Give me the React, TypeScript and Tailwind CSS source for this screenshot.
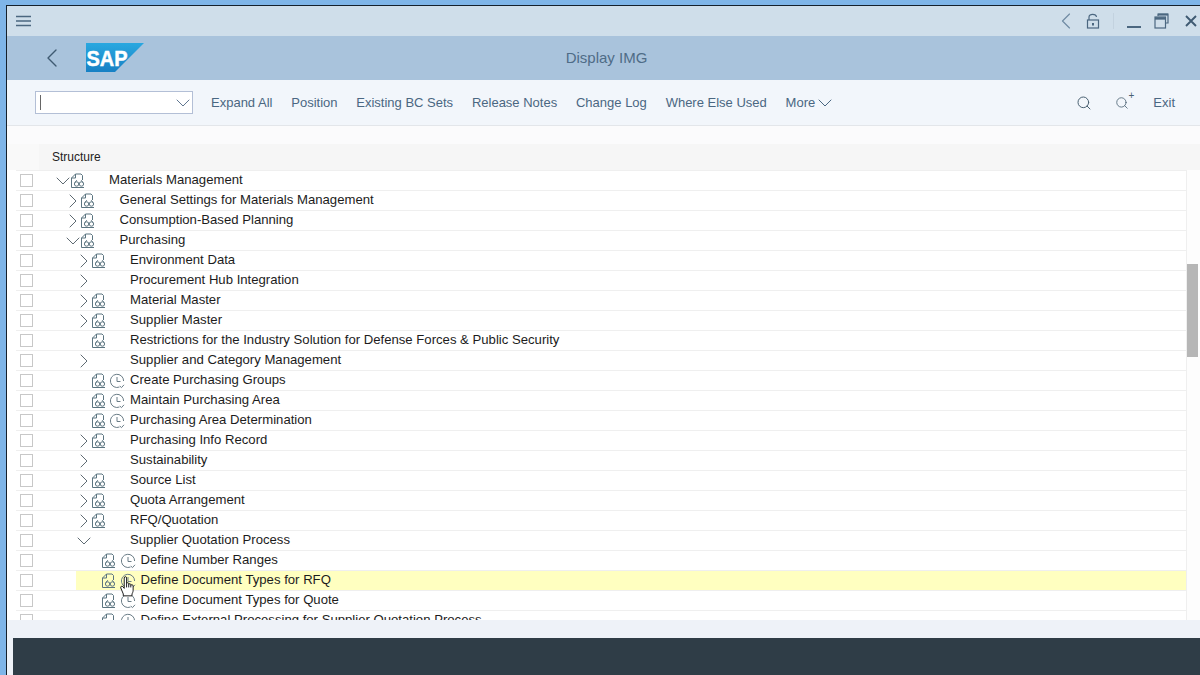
import { ChevronDown, ChevronLeft, ChevronRight, Search } from 'lucide-react';

type Row = {
  label: string;
  level: 0 | 1 | 2 | 3;
  arrow?: 'open' | 'closed';
  doc?: boolean;
  clock?: boolean;
  active?: boolean;
};

const rows: Row[] = [
  { label: 'Materials Management', level: 0, arrow: 'open', doc: true },
  { label: 'General Settings for Materials Management', level: 1, arrow: 'closed', doc: true },
  { label: 'Consumption-Based Planning', level: 1, arrow: 'closed', doc: true },
  { label: 'Purchasing', level: 1, arrow: 'open', doc: true },
  { label: 'Environment Data', level: 2, arrow: 'closed', doc: true },
  { label: 'Procurement Hub Integration', level: 2, arrow: 'closed' },
  { label: 'Material Master', level: 2, arrow: 'closed', doc: true },
  { label: 'Supplier Master', level: 2, arrow: 'closed', doc: true },
  { label: 'Restrictions for the Industry Solution for Defense Forces & Public Security', level: 2, doc: true },
  { label: 'Supplier and Category Management', level: 2, arrow: 'closed' },
  { label: 'Create Purchasing Groups', level: 2, doc: true, clock: true },
  { label: 'Maintain Purchasing Area', level: 2, doc: true, clock: true },
  { label: 'Purchasing Area Determination', level: 2, doc: true, clock: true },
  { label: 'Purchasing Info Record', level: 2, arrow: 'closed', doc: true },
  { label: 'Sustainability', level: 2, arrow: 'closed' },
  { label: 'Source List', level: 2, arrow: 'closed', doc: true },
  { label: 'Quota Arrangement', level: 2, arrow: 'closed', doc: true },
  { label: 'RFQ/Quotation', level: 2, arrow: 'closed', doc: true },
  { label: 'Supplier Quotation Process', level: 2, arrow: 'open' },
  { label: 'Define Number Ranges', level: 3, doc: true, clock: true },
  { label: 'Define Document Types for RFQ', level: 3, doc: true, clock: true, active: true },
  { label: 'Define Document Types for Quote', level: 3, doc: true, clock: true },
  { label: 'Define External Processing for Supplier Quotation Process', level: 3, doc: true, clock: true },
];

const indents = ['w-[7px]', 'w-[17.5px]', 'w-[28px]', 'w-[38.5px]'];
const tools = ['Expand All', 'Position', 'Existing BC Sets', 'Release Notes', 'Change Log', 'Where Else Used'];

// page with a folded corner and reading glasses
const DocIcon = () => (
  <svg className="shrink-0" width="15" height="16" viewBox="0 0 15 16" fill="none" stroke="#5b7480" strokeWidth="1">
    <path d="M1.5 14.5 V5 L5.5 1 H11 L12.5 2.5 V7" />
    <path d="M5.5 1 V5 H1.5" />
    <path d="M1.5 14.5 H14" />
    <circle cx="6.6" cy="11" r="2.2" />
    <circle cx="11.4" cy="11" r="2.2" />
    <path d="M8.8 10.6 H9.2 M4.8 9.6 L6.8 7.2 M13 9.6 L11.2 7.2" />
  </svg>
);

const ClockIcon = () => (
  <svg className="shrink-0" width="16" height="16" viewBox="0 0 16 16" fill="none" stroke="#6b7d87" strokeWidth="1">
    <path d="M10.5 14 A6.6 6.6 0 1 1 14.6 8" />
    <path d="M8 4 V8.5 H11.5" />
    <path d="M10.8 13 L12.5 14.6 L15 11.8" />
  </svg>
);

const HandCursor = () => (
  <svg width="15" height="22" viewBox="0 0 16 23" fill="#ffffff" stroke="#111111" strokeWidth="1" strokeLinejoin="round">
    <path d="M3.5 20 L0.8 13.5 C0.3 12 2 11 3 12.2 L4.5 14 V3 C4.5 1 7 1 7 3 V9 C7 7.6 9.3 7.6 9.3 9 V10 C9.3 8.8 11.5 8.8 11.5 10 V11 C11.5 9.9 14 9.9 14 11.2 V16 C14 18 13.2 19 12.8 20 V22 H3.5 Z" />
    <path d="M7 9 V13 M9.3 10 V13 M11.5 11 V13" fill="none" />
  </svg>
);

const TreeRow = ({ row }: { row: Row }) => (
  <div className="flex h-5 shrink-0 border-t border-[#efefef]">
    <div className="flex w-[31px] shrink-0 items-center pl-[4px]">
      <span className="block h-[13px] w-[13px] border border-[#c8c8c8] bg-white" />
    </div>
    <div className={`shrink-0 ${indents[row.level]}`} />
    <div className={`relative flex flex-1 items-center ${row.active ? '-ml-[10px] bg-[#ffffc0] pl-[10px]' : ''}`}>
      <span className="flex w-[16px] shrink-0 justify-center pl-[1px] text-[#5f6b73]">
        {row.arrow === 'open' && <ChevronDown size={24} strokeWidth={1} className="shrink-0" />}
        {row.arrow === 'closed' && <ChevronRight size={24} strokeWidth={1} className="shrink-0" />}
      </span>
      <span className="flex w-[14px] shrink-0 justify-center">{row.doc && <DocIcon />}</span>
      <span className="flex w-[25px] shrink-0 justify-center pr-[1px]">{row.clock && <ClockIcon />}</span>
      <span className="-mt-px whitespace-nowrap text-[13.15px] text-[#1c1c1c]">{row.label}</span>
      {row.active && (
        <span className="absolute left-[44px] top-[4px] z-10">
          <HandCursor />
        </span>
      )}
    </div>
  </div>
);

const App = () => {
  return (
    <div className="h-[675px] w-[1200px] overflow-hidden bg-[#7fb5e8] pl-[6px] pt-[5px] font-['Liberation_Sans',Arial,sans-serif]">
      <div className="flex h-full flex-col border-l border-t border-[#15202b] bg-[#eef2f8]">
        <div className="flex h-[30px] shrink-0 items-center bg-[#cfdeea] pl-[9px] pr-[3px] text-[#4b6780]">
          <svg width="15" height="12" viewBox="0 0 15 12" stroke="#4b6780" strokeWidth="1.5">
            <path d="M0 1.5 H15 M0 6 H15 M0 10.5 H15" />
          </svg>
          <div className="ml-auto flex items-center">
            <ChevronLeft size={28} strokeWidth={1} className="-ml-[5px] -mr-[4px] text-[#6f8ba3]" />
            <svg className="ml-[10px]" width="14" height="16" viewBox="0 0 14 16" fill="none" stroke="#4b6780" strokeWidth="1.2">
              <path d="M3 7 V4 C3 0.5 10 0.5 10.5 4" />
              <rect x="1.5" y="7" width="11" height="8" />
              <path d="M7 10 V12.5" strokeWidth="2" />
            </svg>
            <span className="ml-[13px] h-[16px] w-px bg-[#c3d2df]" />
            <span className="ml-[13px] mt-[12px] h-[2px] w-[14px] bg-[#4b6780]" />
            <svg className="ml-[13px]" width="15" height="16" viewBox="0 0 15 16" fill="none" stroke="#4b6780" strokeWidth="1.2">
              <path d="M4 3 V1 H14 V10 H12" />
              <path d="M4 1.6 H14" strokeWidth="2" />
              <rect x="1" y="4" width="10.5" height="11" />
              <path d="M1 5.4 H11.5" strokeWidth="2.5" />
            </svg>
            <svg className="ml-[16px]" width="12" height="12" viewBox="0 0 12 12" stroke="#3f5a72" strokeWidth="1.9">
              <path d="M1 1 L11 11 M11 1 L1 11" />
            </svg>
          </div>
        </div>

        <div className="flex h-[44px] shrink-0 items-center bg-[#a9c3dc]">
          <ChevronLeft size={32} strokeWidth={1} className="ml-[29px] -mr-[4px] text-[#3f5a72]" />
          <svg className="ml-[22px]" width="58" height="30" viewBox="0 0 58 30">
            <defs>
              <linearGradient id="sap" x1="0" y1="0" x2="0" y2="1">
                <stop offset="0" stopColor="#2aa8e0" />
                <stop offset="1" stopColor="#1780c4" />
              </linearGradient>
            </defs>
            <polygon points="0,0 58,0 29,29 0,29" fill="url(#sap)" />
            <text x="0.5" y="23" fill="#ffffff" stroke="#ffffff" strokeWidth="0.5" fontFamily="Liberation Sans" fontWeight="700" fontSize="22" textLength="41" lengthAdjust="spacingAndGlyphs">
              SAP
            </text>
          </svg>
          <div className="flex-1 pr-[131px] text-center text-[15px] text-[#4f6c87]">Display IMG</div>
        </div>

        <div className="flex h-[46px] shrink-0 items-center border-b border-[#e3e6ea] bg-[#f2f6fb] pl-[28px] pr-[25px] text-[13px] text-[#4a6782]">
          <div className="mr-[18px] flex h-[23px] w-[158px] items-center justify-between border border-[#b3bfd6] bg-white pl-[4px]">
            <span className="h-[15px] w-px bg-[#666666]" />
            <ChevronDown size={24} strokeWidth={1} className="-mr-[3px] text-[#5f7690]" />
          </div>
          <div className="flex items-center gap-[18.8px]">
            {tools.map((tool) => (
              <span key={tool} className="whitespace-nowrap">
                {tool}
              </span>
            ))}
            <span className="flex items-center">
              More
              <ChevronDown size={24} strokeWidth={1} className="-ml-[2px]" />
            </span>
          </div>
          <div className="ml-auto flex items-center">
            <Search size={16} strokeWidth={1.5} className="-ml-[1px] text-[#4a6172]" />
            <span className="relative ml-[23px]">
              <Search size={14} strokeWidth={1.4} className="text-[#4a6172]" />
              <span className="absolute -right-[5px] -top-[5px] text-[10px] leading-none text-[#4a6172]">+</span>
            </span>
            <span className="ml-[24px]">Exit</span>
          </div>
        </div>

        <div className="flex h-[494px] shrink-0 flex-col bg-[#fbfbfc] pt-[18px]">
          <div className="flex h-[26px] shrink-0">
            <div className="w-[32px] shrink-0 bg-[#f9f9f9]" />
            <div className="flex flex-1 items-center bg-[#f6f6f6] pl-[13px] text-[12px] text-[#222222]">Structure</div>
          </div>
          <div className="flex min-h-0 flex-1">
            <div className="flex min-w-0 flex-1 flex-col overflow-hidden bg-white pl-[9px]">
              {rows.map((row) => (
                <TreeRow key={row.label} row={row} />
              ))}
            </div>
            <div className="w-[14px] shrink-0 border-l border-[#efefef] bg-[#fdfdfd] pr-[2px] pt-[94px]">
              <div className="h-[93px] bg-[#b6b6b6]" />
            </div>
          </div>
        </div>

        <div className="flex min-h-0 flex-1 flex-col pl-[6px] pt-[18px]">
          <div className="flex-1 bg-[#2f3d47]" />
        </div>
      </div>
    </div>
  );
};

export default App;
